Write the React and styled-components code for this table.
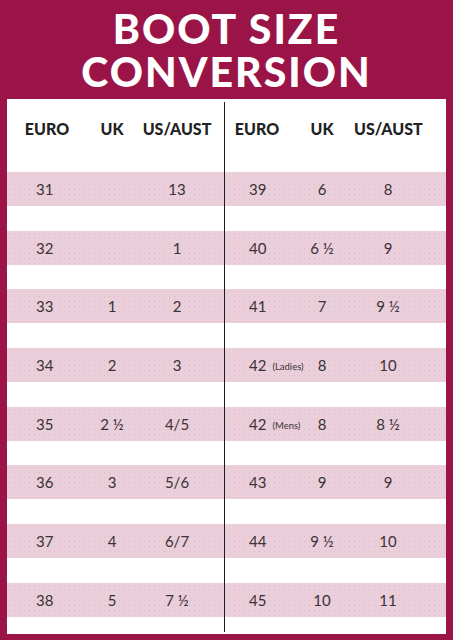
import React from "react";
import styled, { createGlobalStyle } from "styled-components";

const GlobalStyle = createGlobalStyle`
  html, body {
    margin: 0;
    padding: 0;
    background: #9a1447;
  }
  body {
    font-family: Lato, "Open Sans", sans-serif;
  }
`;

const rows = [
  ["31", "", "13", "39", "6", "8"],
  ["32", "", "1", "40", "6 ½", "9"],
  ["33", "1", "2", "41", "7", "9 ½"],
  ["34", "2", "3", "42", "8", "10", "Ladies"],
  ["35", "2 ½", "4/5", "42", "8", "8 ½", "Mens"],
  ["36", "3", "5/6", "43", "9", "9"],
  ["37", "4", "6/7", "44", "9 ½", "10"],
  ["38", "5", "7 ½", "45", "10", "11"],
];

function App() {
  return (
    <Page>
      <GlobalStyle />
      <Title>
        <TitleLine>BOOT SIZE</TitleLine>
        <TitleLine>CONVERSION</TitleLine>
      </Title>

      <Panel>
        <Divider />
        <HeadRow>
          <Half>
            <Head>EURO</Head>
            <Head>UK</Head>
            <Head>US/AUST</Head>
          </Half>
          <Half $right>
            <Head>EURO</Head>
            <Head>UK</Head>
            <Head>US/AUST</Head>
          </Half>
        </HeadRow>

        <Body>
          {rows.map((r, i) => (
            <Band key={i}>
              <Half>
                <Euro $pad={29}>{r[0]}</Euro>
                <Cell>{r[1]}</Cell>
                <Cell>{r[2]}</Cell>
              </Half>
              <Half $right>
                <Euro $pad={25}>
                  {r[3]}
                  {r[6] && <Note>({r[6]})</Note>}
                </Euro>
                <Cell>{r[4]}</Cell>
                <Cell>{r[5]}</Cell>
              </Half>
            </Band>
          ))}
        </Body>
      </Panel>
    </Page>
  );
}

const Page = styled.div`
  width: 453px;
  height: 640px;
  background: #9a1447;
  display: flex;
  flex-direction: column;
  overflow: hidden;
`;

const Title = styled.h1`
  margin: 0;
  height: 99px;
  box-sizing: border-box;
  padding-top: 8px;
  display: flex;
  flex-direction: column;
  align-items: center;
  color: #fff;
  font-family: Lato, sans-serif;
  font-weight: 900;
  font-size: 41px;
  letter-spacing: 2px;
`;

const TitleLine = styled.div`
  height: 43px;
  line-height: 42px;
  white-space: nowrap;
`;

const Panel = styled.div`
  position: relative;
  margin: 0 7px;
  height: 535px;
  background: #fff;
  display: flex;
  flex-direction: column;
`;

const Divider = styled.div`
  position: absolute;
  left: 216.5px;
  top: 3px;
  bottom: 2px;
  width: 1.5px;
  background: #1c1c1c;
`;

const HeadRow = styled.div`
  height: 73px;
  display: flex;
  align-items: center;
  padding-bottom: 14px;
  box-sizing: border-box;
`;

const Half = styled.div`
  display: grid;
  grid-template-columns: ${(p) => (p.$right ? "66px 64px 68px" : "80px 50px 80px")};
  margin-left: ${(p) => (p.$right ? "7px" : "0")};
  align-items: center;
`;

const Head = styled.div`
  text-align: center;
  font-family: Lato, sans-serif;
  font-weight: 900;
  font-size: 16px;
  color: #222;
  white-space: nowrap;
`;

const Body = styled.div`
  display: flex;
  flex-direction: column;
  gap: 24.7px;
`;

const Band = styled.div`
  height: 34px;
  display: flex;
  align-items: center;
  background-color: #eaceda;
  background-image: radial-gradient(circle, rgba(170, 110, 140, 0.2) 0.6px, transparent 1px);
  background-size: 5px 5px;
`;

const Cell = styled.div`
  text-align: center;
  font-family: Lato, sans-serif;
  font-weight: 400;
  font-size: 15px;
  color: #3a3236;
  white-space: nowrap;
`;

const Euro = styled(Cell)`
  text-align: left;
  padding-left: ${(p) => p.$pad}px;
`;

const Note = styled.span`
  font-size: 9.5px;
  margin-left: 6px;
  vertical-align: 1px;
`;

export default App;
